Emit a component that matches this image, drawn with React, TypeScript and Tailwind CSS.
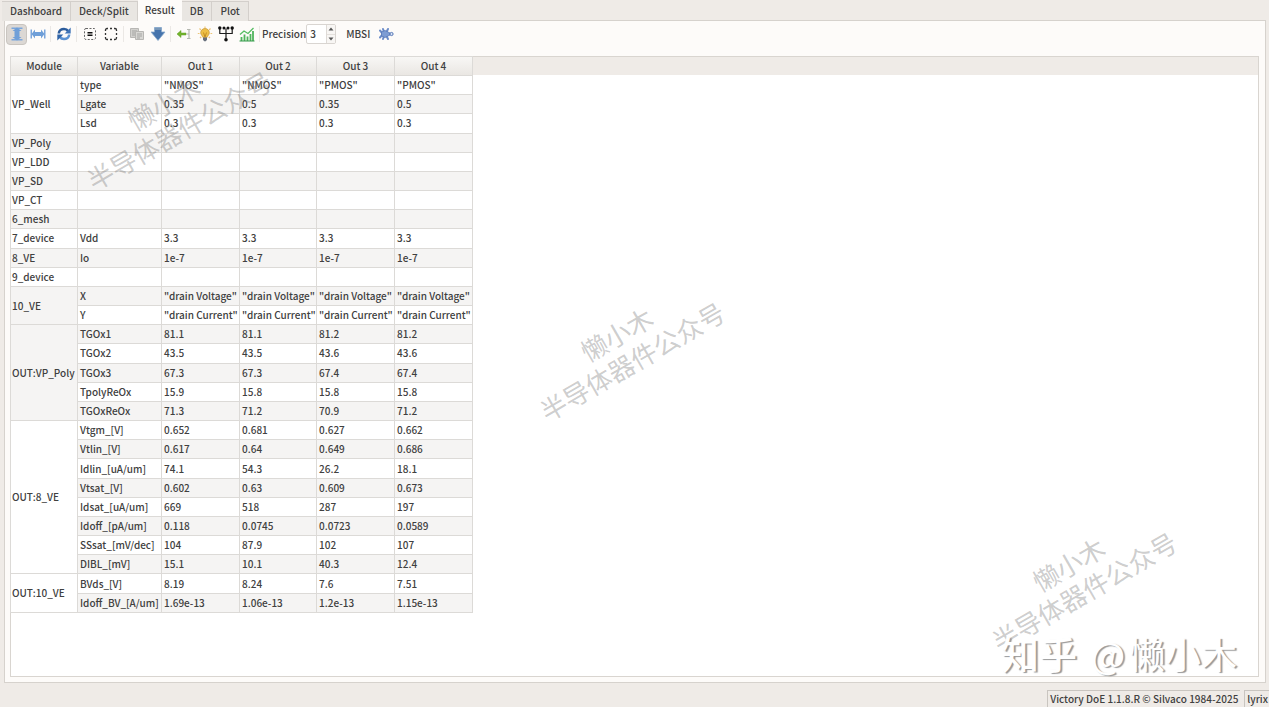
import React from "react";

type Group = { module: string; rows: string[][] };

const groups: Group[] = [
  {
    module: "VP_Well",
    rows: [
      ["type", '"NMOS"', '"NMOS"', '"PMOS"', '"PMOS"'],
      ["Lgate", "0.35", "0.5", "0.35", "0.5"],
      ["Lsd", "0.3", "0.3", "0.3", "0.3"],
    ],
  },
  { module: "VP_Poly", rows: [["", "", "", "", ""]] },
  { module: "VP_LDD", rows: [["", "", "", "", ""]] },
  { module: "VP_SD", rows: [["", "", "", "", ""]] },
  { module: "VP_CT", rows: [["", "", "", "", ""]] },
  { module: "6_mesh", rows: [["", "", "", "", ""]] },
  { module: "7_device", rows: [["Vdd", "3.3", "3.3", "3.3", "3.3"]] },
  { module: "8_VE", rows: [["Io", "1e-7", "1e-7", "1e-7", "1e-7"]] },
  { module: "9_device", rows: [["", "", "", "", ""]] },
  {
    module: "10_VE",
    rows: [
      ["X", '"drain Voltage"', '"drain Voltage"', '"drain Voltage"', '"drain Voltage"'],
      ["Y", '"drain Current"', '"drain Current"', '"drain Current"', '"drain Current"'],
    ],
  },
  {
    module: "OUT:VP_Poly",
    rows: [
      ["TGOx1", "81.1", "81.1", "81.2", "81.2"],
      ["TGOx2", "43.5", "43.5", "43.6", "43.6"],
      ["TGOx3", "67.3", "67.3", "67.4", "67.4"],
      ["TpolyReOx", "15.9", "15.8", "15.8", "15.8"],
      ["TGOxReOx", "71.3", "71.2", "70.9", "71.2"],
    ],
  },
  {
    module: "OUT:8_VE",
    rows: [
      ["Vtgm_[V]", "0.652", "0.681", "0.627", "0.662"],
      ["Vtlin_[V]", "0.617", "0.64", "0.649", "0.686"],
      ["Idlin_[uA/um]", "74.1", "54.3", "26.2", "18.1"],
      ["Vtsat_[V]", "0.602", "0.63", "0.609", "0.673"],
      ["Idsat_[uA/um]", "669", "518", "287", "197"],
      ["Idoff_[pA/um]", "0.118", "0.0745", "0.0723", "0.0589"],
      ["SSsat_[mV/dec]", "104", "87.9", "102", "107"],
      ["DIBL_[mV]", "15.1", "10.1", "40.3", "12.4"],
    ],
  },
  {
    module: "OUT:10_VE",
    rows: [
      ["BVds_[V]", "8.19", "8.24", "7.6", "7.51"],
      ["Idoff_BV_[A/um]", "1.69e-13", "1.06e-13", "1.2e-13", "1.15e-13"],
    ],
  },
];

const flatRows = groups.flatMap((g) =>
  g.rows.map((cells, i) => ({ cells, module: i === 0 ? g.module : null, span: g.rows.length })),
);

const columns = [
  { label: "Module", width: "w-[67px]" },
  { label: "Variable", width: "w-[84px]" },
  { label: "Out 1", width: "w-[78px]" },
  { label: "Out 2", width: "w-[77px]" },
  { label: "Out 3", width: "w-[78px]" },
  { label: "Out 4", width: "w-[78px]" },
];

function Svg({ children }: { children: React.ReactNode }) {
  return (
    <svg viewBox="0 0 16 16" className="size-4 shrink-0" fill="none" aria-hidden="true">
      {children}
    </svg>
  );
}

const HeightIcon = () => (
  <Svg>
    <path d="M2.500 1.500h11V3h-11zM2.500 13h11v1.500h-11z" fill="#7ba6dc" />
    <path d="M8 1.500 12.500 5H10.500v6h2L8 14.500 3.500 11H5.500V5H3.500z" fill="#6f9fd8" />
  </Svg>
);
const WidthIcon = () => (
  <Svg>
    <path d="M.5 3.500H2v9H.5zM14 3.500h1.500v9H14z" fill="#7ba6dc" />
    <path d="M1.500 8 5 3.500V6h6V3.500L14.500 8 11 12.500V10H5v2.500z" fill="#6f9fd8" />
  </Svg>
);
const RefreshIcon = () => (
  <Svg>
    <path d="M2.800 7.500C3 4.500 5.500 3 8 3c2 0 3.300.8 4 2" stroke="#2c5c9c" strokeWidth="2.600" />
    <path d="M14.700 1.500v6H8.700z" fill="#3f74b8" />
    <path d="M13.200 8.500C13 11.500 10.500 13 8 13c-2 0-3.300-.8-4-2" stroke="#5d93d3" strokeWidth="2.600" />
    <path d="M1.300 14.500v-6h6z" fill="#2f64a8" />
  </Svg>
);
const SelectRowsIcon = () => (
  <Svg>
    <rect x="2.500" y="2.500" width="11" height="11" rx="1.500" stroke="#666" strokeDasharray="2 1.500" />
    <path d="M5.500 6.800h5M5.500 9.300h5" stroke="#111" strokeWidth="1.500" />
  </Svg>
);
const SelectAreaIcon = () => (
  <Svg>
    <path d="M2.500 5V4A1.500 1.500 0 0 1 4 2.500h1M11 2.500h1A1.500 1.500 0 0 1 13.500 4v1M13.500 11v1a1.500 1.500 0 0 1-1.500 1.500h-1M5 13.500H4A1.500 1.500 0 0 1 2.500 12v-1M7 2.500h2M7 13.500h2M2.500 7v2M13.500 7v2" stroke="#333" strokeWidth="1.300" />
  </Svg>
);
const CopyIcon = () => (
  <Svg>
    <path d="M1.500 2.500h8v9h-8z" fill="#d2d1ce" stroke="#b8b7b4" />
    <path d="M3 5h5M3 7h5M3 9h5" stroke="#a5a5a3" />
    <path d="M6.500 5.500h8v8h-8z" fill="#d8d7d4" stroke="#b8b7b4" />
    <path d="M8 8h5M8 10h5M8 12h3" stroke="#a5a5a3" />
  </Svg>
);
const DownIcon = () => (
  <Svg>
    <path d="M4.500 1.500h7V6H15l-7 8.500L1 6h3.500z" fill="#4674ac" stroke="#87a8cc" strokeWidth=".8" />
    <path d="M5 2h6v2H5z" fill="#7897b8" />
  </Svg>
);
const InsertIcon = () => (
  <Svg>
    <path d="M1 8l4-3.500V7h5v2H5v2.500z" fill="#73b52d" stroke="#5c9a20" strokeWidth=".5" />
    <path d="M11 3.500h3.500M11 12.500h3.500M13 3.500v9M10.500 8h2" stroke="#b5b8b0" strokeWidth="1.200" />
  </Svg>
);
const BulbIcon = () => (
  <Svg>
    <path d="M8 .5V2M2.500 2.500l1.500 1.500M13.500 2.500 12 4M.8 7.500h1.700M13.500 7.500h1.700M3 12l1.300-1.200M13 12l-1.300-1.200" stroke="#edc678" strokeWidth="1.200" />
    <path d="M8 2.500a4.300 4.300 0 0 0-4.300 4.300c0 2 1.800 3 2.300 4.700h4c.5-1.700 2.300-2.700 2.300-4.700A4.300 4.300 0 0 0 8 2.500z" fill="#eebf45" stroke="#c99a3c" strokeWidth=".8" />
    <path d="M6.500 6.500 8 11l1.500-4.500" stroke="#b98218" strokeWidth=".8" />
    <path d="M6 11.500h4v2.300L8.800 15.300H7.200L6 13.800z" fill="#68707d" />
  </Svg>
);
const TreeIcon = () => (
  <Svg>
    <path d="M1.800 2.500v5h12.400v-5M8 2.500v11" stroke="#1c1c1c" strokeWidth="1.200" />
    <g fill="#111">
      <circle cx="1.800" cy="2" r="1.700" />
      <circle cx="6" cy="2" r="1.500" />
      <circle cx="10" cy="2" r="1.500" />
      <circle cx="14.200" cy="2" r="1.700" />
      <circle cx="8" cy="13.800" r="1.800" />
    </g>
  </Svg>
);
const ChartIcon = () => (
  <Svg>
    <path d="M1 8.500 5 5l4 2.500L14.500 2" stroke="#55bd62" strokeWidth="1.300" />
    <path d="M2.500 15v-4M5.500 15V8.500M8.500 15v-4.500M11.500 15V8M14 15V5" stroke="#4fb45c" strokeWidth="1.800" />
    <path d="M.5 15h15" stroke="#35994a" />
  </Svg>
);
const MbsiIcon = () => (
  <Svg>
    <path d="M6 6 5 3M8.500 6l1.500-3M6 10l-1 3M8.500 10l1.500 3M2 4.500 5 8l-3 3.500M9 8h4" stroke="#6a8bc8" strokeWidth="2" strokeLinecap="round" />
    <path d="M3.500 6 7 4.500 12 7v2l-5 2.500L3.500 10z" fill="#7d9cd3" stroke="#5878b8" strokeWidth=".8" />
    <circle cx="13.500" cy="8" r="1.600" fill="#dbe5f5" stroke="#5475b6" />
  </Svg>
);

function ToolButton({ label, pressed, children }: { label: string; pressed?: boolean; children: React.ReactNode }) {
  return (
    <button
      type="button"
      aria-label={label}
      className={
        pressed
          ? "flex h-[21px] w-[21px] items-center justify-center rounded-sm border border-[#c9c5c0] bg-[#dcd8d4]"
          : "flex h-5 w-[21px] items-center justify-center"
      }
    >
      {children}
    </button>
  );
}

const Separator = () => <div className="mx-[2px] h-4 w-px bg-[#ebe8e5]" />;

function Tab({ label, active }: { label: string; active?: boolean }) {
  return (
    <button
      type="button"
      role="tab"
      aria-selected={!!active}
      className={
        active
          ? "h-[21px] bg-[#fdfbf9] px-[7px] pb-[2px]"
          : "h-5 border-t border-r border-[#d3cfcb] bg-[#e9e6e2] px-2 pb-px"
      }
    >
      {label}
    </button>
  );
}

function Watermark({ place }: { place: string }) {
  return (
    <div
      aria-hidden="true"
      className={`pointer-events-none absolute -translate-x-1/2 -translate-y-1/2 -rotate-30 text-center text-[26px] leading-[31px] font-normal whitespace-nowrap text-[#808080]/40 ${place}`}
    >
      懒小木
      <br />
      半导体器件公众号
    </div>
  );
}

export default function App() {
  return (
    <div className="relative flex min-h-screen flex-col overflow-hidden bg-[#efebe7] font-['Noto_Sans_CJK_SC',sans-serif] text-[10px] leading-4 font-medium text-[#404040]">
      <div role="tablist" className="relative z-10 -mb-px flex h-[21px] items-end pl-[2px]">
        <Tab label="Dashboard" />
        <Tab label="Deck/Split" />
        <Tab label="Result" active />
        <Tab label="DB" />
        <Tab label="Plot" />
      </div>

      <main className="mr-[3px] ml-1 flex flex-1 flex-col border border-[#d6d2cd] bg-[#fdfbf9] px-[5px] pb-[5px]">
        <div className="flex h-[35px] items-start pt-[3px]">
          <div className="-ml-1 flex h-5 items-center">
            <ToolButton label="Fit height" pressed><HeightIcon /></ToolButton>
            <ToolButton label="Fit width"><WidthIcon /></ToolButton>
            <Separator />
            <ToolButton label="Refresh"><RefreshIcon /></ToolButton>
            <Separator />
            <ToolButton label="Select rows"><SelectRowsIcon /></ToolButton>
            <ToolButton label="Select area"><SelectAreaIcon /></ToolButton>
            <Separator />
            <ToolButton label="Copy"><CopyIcon /></ToolButton>
            <ToolButton label="Download"><DownIcon /></ToolButton>
            <Separator />
            <ToolButton label="Insert"><InsertIcon /></ToolButton>
            <ToolButton label="Hint"><BulbIcon /></ToolButton>
            <ToolButton label="Tree"><TreeIcon /></ToolButton>
            <ToolButton label="Chart"><ChartIcon /></ToolButton>
            <Separator />
            <label htmlFor="precision">Precision</label>
            <div className="flex h-5 w-[30px] overflow-hidden rounded-xs border border-[#d9d5d1] bg-white">
              <input id="precision" type="text" defaultValue="3" className="w-[19px] pl-[3px] outline-none" />
              <div className="flex flex-1 flex-col border-l border-[#dedad6] bg-[#f8f6f4]">
                <button type="button" aria-label="Increase" className="flex flex-1 items-center justify-center border-b border-[#e4e0dc]">
                  <svg viewBox="0 0 6 4" className="h-1 w-1.5"><path d="M3 .5 5.500 3.500h-5z" fill="#555" /></svg>
                </button>
                <button type="button" aria-label="Decrease" className="flex flex-1 items-center justify-center">
                  <svg viewBox="0 0 6 4" className="h-1 w-1.5"><path d="M3 3.500.5.5h5z" fill="#555" /></svg>
                </button>
              </div>
            </div>
            <span className="mr-[5px] ml-[10px]">MBSI</span>
            <ToolButton label="MBSI"><MbsiIcon /></ToolButton>
          </div>
        </div>

        <div className="mr-[1px] flex flex-1 flex-col border border-[#d9d5d0] bg-white">
          <div className="flex items-start">
            <table className="-mt-px -ml-px h-[557px] w-[462px] table-fixed border-collapse">
              <thead>
                <tr className="h-[19px] bg-linear-to-b from-[#f8f7f5] to-[#e9e6e2]">
                  {columns.map((c) => (
                    <th key={c.label} scope="col" className={`border border-[#dcdad7] p-0 font-medium ${c.width}`}>
                      {c.label}
                    </th>
                  ))}
                </tr>
              </thead>
              <tbody>
                {flatRows.map((r, i) => (
                  <tr key={i} className={i % 2 ? "bg-[#f5f4f3]" : "bg-white"}>
                    {r.module !== null && (
                      <th
                        scope="rowgroup"
                        rowSpan={r.span}
                        className={`border border-[#dcdad7] py-0 pr-0 pl-px text-left font-medium whitespace-nowrap ${i % 2 ? "bg-[#f5f4f3]" : "bg-white"}`}
                      >
                        {r.module}
                      </th>
                    )}
                    {r.cells.map((c, j) => (
                      <td key={j} className="border border-[#dcdad7] py-0 pr-0 pl-[2px] whitespace-nowrap">
                        {c}
                      </td>
                    ))}
                  </tr>
                ))}
              </tbody>
            </table>
            <div className="h-[18px] flex-1 bg-[#efebe7]" />
          </div>
        </div>
      </main>

      <footer className="flex h-6 items-end justify-end gap-1">
        <div className="border-t border-l border-[#c9c5c0] px-[2px]">Victory DoE 1.1.8.R © Silvaco 1984-2025</div>
        <div className="border-t border-l border-[#c9c5c0] pr-px pl-[2px]">lyrix</div>
      </footer>

      <Watermark place="left-[171px] top-[116px]" />
      <Watermark place="left-[624px] top-[347px]" />
      <Watermark place="left-[1076px] top-[577px]" />
      <div className="pointer-events-none absolute right-[32px] bottom-[34px] flex items-center text-[36px] leading-10 font-normal whitespace-nowrap text-white [text-shadow:2px_1px_1px_#999]">
        <span className="mr-[14px] text-[38px] font-medium">知乎</span>
        <span className="mr-1">@</span>
        <span>懒小木</span>
      </div>
    </div>
  );
}
